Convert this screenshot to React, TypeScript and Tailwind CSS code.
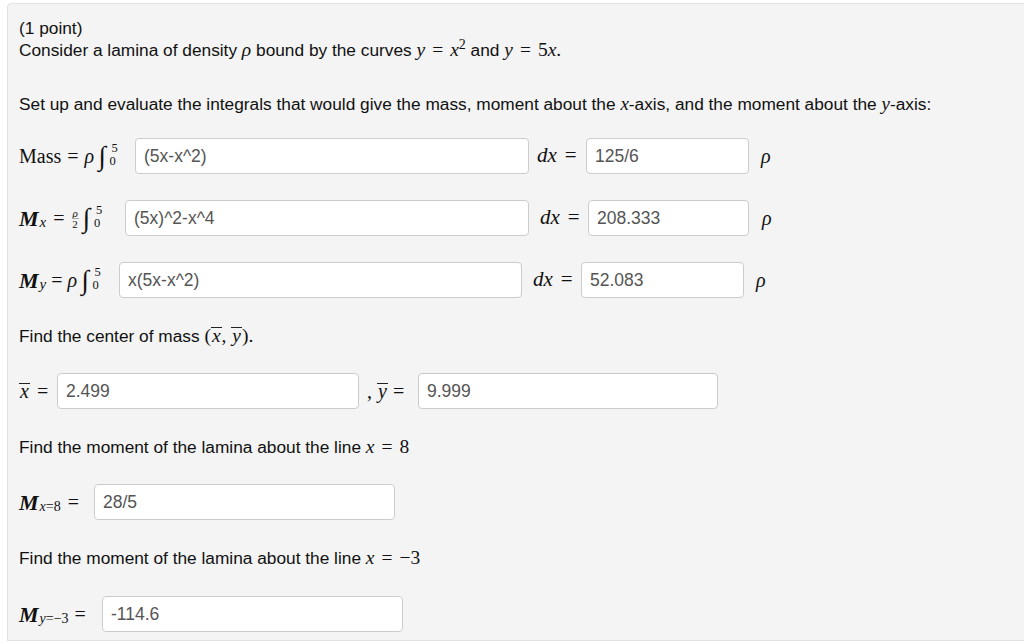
import React from "react";

const serif = "font-['Liberation_Serif',serif]";

function Eq({ mx = "mx-[7px]" }: { mx?: string }) {
  return <span className={mx}>=</span>;
}

function Int() {
  return (
    <span className="inline-flex items-center">
      <span className="italic text-[27px] leading-none">∫</span>
      <span className="flex flex-col text-[12.5px] leading-[13px] ml-[4px] -mt-[3px]">
        <span className="ml-[2px]">5</span>
        <span>0</span>
      </span>
    </span>
  );
}

function Bar({ children }: { children: React.ReactNode }) {
  return (
    <span className="inline-block italic border-t-[1.5px] border-[#222] leading-[15px] px-[1px]">{children}</span>
  );
}

function Field({ value, w }: { value: string; w: string }) {
  return (
    <input
      readOnly
      defaultValue={value}
      className={`${w} h-[36px] shrink-0 rounded-[4px] border border-[#cccccc] bg-white pl-[8px] text-[17.5px] text-[#555] font-['Liberation_Sans',Arial,sans-serif] outline-none`}
    />
  );
}

function Rho({ ml }: { ml: string }) {
  return <span className={`${serif} ${ml} italic text-[20px]`}>ρ</span>;
}

function Dx({ w, pl }: { w: string; pl: string }) {
  return (
    <span className={`${serif} ${w} ${pl} shrink-0 text-[21px] whitespace-nowrap`}>
      <i>dx</i>
      <span className="ml-[8px]">=</span>
    </span>
  );
}

export default function App() {
  return (
    <div className="w-[1024px] h-[644px] overflow-hidden bg-white font-['Liberation_Sans',Arial,sans-serif] text-[17.3px] text-[#111]">
      <div className="mt-[3px] ml-[7px] w-[1030px] border border-[#e2e2e2] rounded-tl-[4px] bg-[#f4f4f4] pl-[11px] pt-[13px] pb-[8px] flex flex-col">
        <div className="h-[22px] leading-[22px]">(1 point)</div>
        <div className="h-[22px] leading-[22px] whitespace-nowrap">
          Consider a lamina of density <span className={`${serif} italic text-[19.5px]`}>ρ</span> bound by the curves{" "}
          <span className={`${serif} text-[19.5px]`}>
            <i>y</i>
            <Eq />
            <i>x</i>
            <sup className="text-[14px]">2</sup>
          </span>{" "}
          and{" "}
          <span className={`${serif} text-[19.5px]`}>
            <i>y</i>
            <Eq />
            5<i>x</i>.
          </span>
        </div>
        <div className="h-[22px] leading-[22px] mt-[32px] whitespace-nowrap">
          Set up and evaluate the integrals that would give the mass, moment about the{" "}
          <span className={`${serif} italic text-[19px]`}>x</span>-axis, and the moment about the{" "}
          <span className={`${serif} italic text-[19px]`}>y</span>-axis:
        </div>

        <div className="mt-[23px] h-[36px] flex items-center">
          <span className={`${serif} w-[116px] shrink-0 text-[20px] flex items-center whitespace-nowrap`}>
            Mass
            <Eq mx="mx-[6px]" />
            <i className="mr-[4px]">ρ</i>
            <Int />
          </span>
          <Field value="(5x-x^2)" w="w-[394px]" />
          <Dx w="w-[57px]" pl="pl-[8px]" />
          <Field value="125/6" w="w-[163px]" />
          <Rho ml="ml-[12px]" />
        </div>

        <div className="mt-[26px] h-[36px] flex items-center">
          <span className={`${serif} w-[106px] shrink-0 text-[20px] flex items-center whitespace-nowrap`}>
            <b className="italic text-[22px]">M</b>
            <i className="text-[15px] mt-[8px] ml-[1px]">x</i>
            <Eq mx="mx-[7px]" />
            <span className="flex flex-col items-center text-[11px] leading-[10px] mr-[4px]">
              <i>ρ</i>
              <span className="w-[7px] h-px bg-[#aaa]" />
              <span>2</span>
            </span>
            <Int />
          </span>
          <Field value="(5x)^2-x^4" w="w-[404px]" />
          <Dx w="w-[59px]" pl="pl-[11px]" />
          <Field value="208.333" w="w-[161px]" />
          <Rho ml="ml-[13px]" />
        </div>

        <div className="mt-[26px] h-[36px] flex items-center">
          <span className={`${serif} w-[100px] shrink-0 text-[20px] flex items-center whitespace-nowrap`}>
            <b className="italic text-[22px]">M</b>
            <i className="text-[15px] mt-[8px] ml-[1px]">y</i>
            <Eq mx="mx-[5px]" />
            <i className="mr-[4px]">ρ</i>
            <Int />
          </span>
          <Field value="x(5x-x^2)" w="w-[403px]" />
          <Dx w="w-[59px]" pl="pl-[11px]" />
          <Field value="52.083" w="w-[163px]" />
          <Rho ml="ml-[12px]" />
        </div>

        <div className="h-[22px] leading-[22px] mt-[27px] whitespace-nowrap">
          Find the center of mass{" "}
          <span className={`${serif} text-[19.5px]`}>
            (<Bar>x</Bar>, <Bar>y</Bar>).
          </span>
        </div>

        <div className="mt-[26px] h-[36px] flex items-center">
          <span className={`${serif} w-[38px] shrink-0 text-[20px] whitespace-nowrap`}>
            <Bar>x</Bar>
            <span className="ml-[7px]">=</span>
          </span>
          <Field value="2.499" w="w-[302px]" />
          <span className={`${serif} w-[59px] pl-[8px] shrink-0 text-[20px] whitespace-nowrap`}>
            , <Bar>y</Bar>
            <span className="ml-[5px]">=</span>
          </span>
          <Field value="9.999" w="w-[300px]" />
        </div>

        <div className="h-[22px] leading-[22px] mt-[27px] whitespace-nowrap">
          Find the moment of the lamina about the line{" "}
          <span className={`${serif} text-[19.5px]`}>
            <i>x</i>
            <Eq />8
          </span>
        </div>

        <div className="mt-[26px] h-[36px] flex items-center">
          <span className={`${serif} w-[75px] shrink-0 text-[20px] flex items-center whitespace-nowrap`}>
            <b className="italic text-[22px]">M</b>
            <span className="text-[14px] mt-[8px] ml-[1px]">
              <i>x</i>=8
            </span>
            <span className="ml-[7px]">=</span>
          </span>
          <Field value="28/5" w="w-[301px]" />
        </div>

        <div className="h-[22px] leading-[22px] mt-[27px] whitespace-nowrap">
          Find the moment of the lamina about the line{" "}
          <span className={`${serif} text-[19.5px]`}>
            <i>x</i>
            <Eq />−3
          </span>
        </div>

        <div className="mt-[27px] h-[36px] flex items-center">
          <span className={`${serif} w-[83px] shrink-0 text-[20px] flex items-center whitespace-nowrap`}>
            <b className="italic text-[22px]">M</b>
            <span className="text-[14px] mt-[8px] ml-[1px]">
              <i>y</i>=−3
            </span>
            <span className="ml-[6px]">=</span>
          </span>
          <Field value="-114.6" w="w-[301px]" />
        </div>
      </div>
    </div>
  );
}
